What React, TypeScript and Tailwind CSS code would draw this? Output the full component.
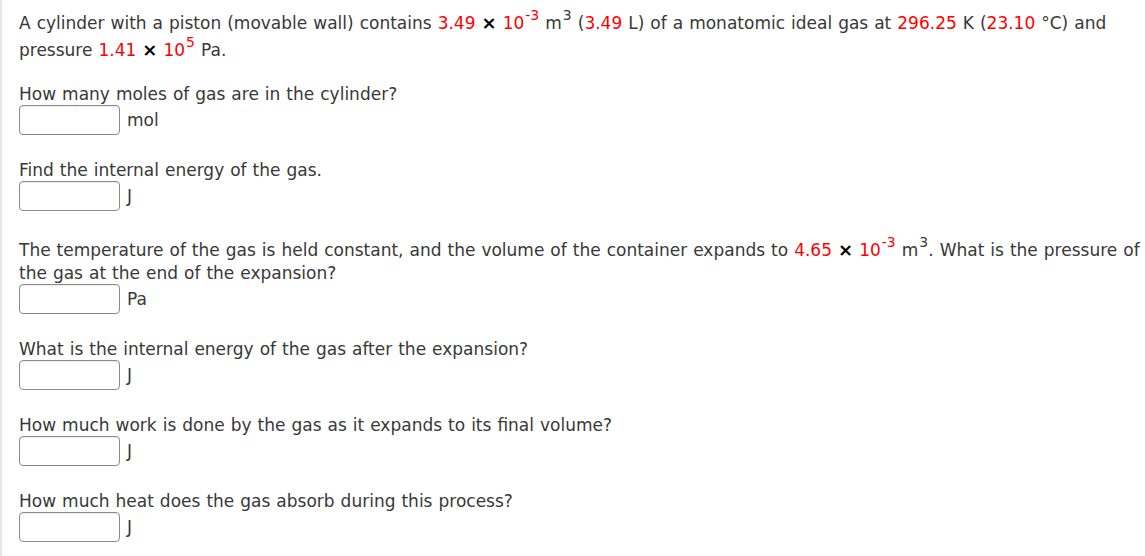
import React from 'react'

// valor destacado em vermelho
function Red({ children }: { children: React.ReactNode }) {
  return <span className="text-[#ff0000]">{children}</span>
}

function Sup({ children, red = false }: { children: React.ReactNode; red?: boolean }) {
  return (
    <span className={`relative -top-[9px] ml-[1px] text-[14px] leading-none ${red ? 'text-[#ff0000]' : ''}`}>
      {children}
    </span>
  )
}

function Times() {
  return <span className="font-bold text-black text-[18px] leading-none">×</span>
}

function AnswerBox({ unit }: { unit: string }) {
  return (
    <div className="flex items-center gap-[7px] h-[30px]">
      <div className="w-[101px] h-[30px] rounded-[4px] border border-[#8a8a8a] bg-white shadow-[inset_0_1px_1px_rgba(0,0,0,0.08)]" />
      <span>{unit}</span>
    </div>
  )
}

const questions = [
  { text: 'What is the internal energy of the gas after the expansion?', unit: 'J' },
  { text: 'How much work is done by the gas as it expands to its final volume?', unit: 'J' },
  { text: 'How much heat does the gas absorb during this process?', unit: 'J' },
]

export default function App() {
  return (
    <div className="min-h-screen bg-white border-l-2 border-[#e6e6e6] pl-[17px] pt-[10px] font-['Verdana','DejaVu_Sans',sans-serif] text-[17px] leading-[23px] [word-spacing:0.6px] text-[#383838] whitespace-nowrap overflow-hidden">
      <p className="leading-[27px]">
        A cylinder with a piston (movable wall) contains <Red>3.49</Red> <Times /> <Red>10</Red>
        <Sup red>-3</Sup> m<Sup>3</Sup> (<Red>3.49</Red> L) of a monatomic ideal gas at <Red>296.25</Red> K (
        <Red>23.10</Red> °C) and
        <br />
        pressure <Red>1.41</Red> <Times /> <Red>10</Red>
        <Sup red>5</Sup> Pa.
      </p>

      <div className="mt-[18px]">
        <p className="pt-[2px] leading-[21px]">How many moles of gas are in the cylinder?</p>
        <AnswerBox unit="mol" />
      </div>

      <div className="mt-[23px]">
        <p className="pt-[2px] leading-[21px]">Find the internal energy of the gas.</p>
        <AnswerBox unit="J" />
      </div>

      <div className="mt-[23px]">
        <p className="pt-[5px]">
          The temperature of the gas is held constant, and the volume of the container expands to <Red>4.65</Red>{' '}
          <Times /> <Red>10</Red>
          <Sup red>-3</Sup> m<Sup>3</Sup>. What is the pressure of
          <br />
          the gas at the end of the expansion?
        </p>
        <div className="-mt-[1px]">
          <AnswerBox unit="Pa" />
        </div>
      </div>

      {questions.map((q) => (
        <div key={q.text} className="mt-[23px]">
          <p className="pt-[2px] leading-[21px]">{q.text}</p>
          <AnswerBox unit={q.unit} />
        </div>
      ))}
    </div>
  )
}
